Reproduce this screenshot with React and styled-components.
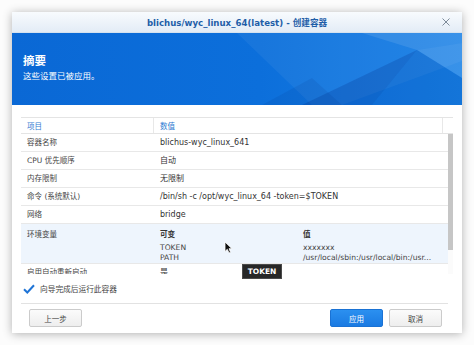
import React from 'react';
import styled, { createGlobalStyle } from 'styled-components';

const Global = createGlobalStyle`
  html, body { margin: 0; padding: 0; background: #fcfcfc; }
  body { font-family: "DejaVu Sans", "Noto Sans CJK SC", sans-serif; }
  * { box-sizing: border-box; }
`;

const Stage = styled.div`
  width: 474px;
  height: 345px;
  padding: 12px;
`;

const Window = styled.div`
  position: relative;
  width: 450px;
  height: 321px;
  background: #fff;
  box-shadow: 0 1px 9px rgba(0, 0, 0, 0.3);
  display: flex;
  flex-direction: column;
  overflow: hidden;
`;

const TitleBar = styled.div`
  height: 21px;
  flex: none;
  display: grid;
  grid-template-columns: 1fr auto 1fr;
  align-items: center;
  background: linear-gradient(#f8fbfe, #e3ecf6);
  border-bottom: 1px solid #d5e2ef;
`;

const Title = styled.div`
  font-weight: bold;
  font-size: 8.6px;
  color: #1f5ea8;
  white-space: nowrap;
`;

const Close = styled.svg`
  justify-self: end;
  margin-right: 12px;
  width: 8px;
  height: 8px;
`;

const Banner = styled.div`
  position: relative;
  height: 72px;
  flex: none;
  padding: 21px 0 0 11px;
  background: linear-gradient(90deg, #0a68d5 0%, #0c6fdb 55%, #1880e6 100%);
  color: #fff;
  overflow: hidden;
`;

const Facets = styled.svg`
  position: absolute;
  inset: 0;
  width: 100%;
  height: 100%;
`;

const BannerTitle = styled.div`
  position: relative;
  font-size: 11.5px;
  font-weight: bold;
  line-height: 15px;
`;

const BannerSub = styled.div`
  position: relative;
  margin-top: 1px;
  font-size: 8.5px;
  line-height: 12px;
`;

const Content = styled.div`
  padding: 12px 9px 0;
  flex: none;
`;

const Head = styled.div`
  display: grid;
  grid-template-columns: 133px 1fr 10px;
  height: 17px;
  border-top: 1px solid #e4e4e4;
  border-bottom: 1px solid #e4e4e4;
`;

const HeadCell = styled.div`
  display: flex;
  align-items: center;
  padding-left: 6px;
  font-size: 7.5px;
  color: #2f7bd2;
  border-right: ${(p) => (p.$last ? 'none' : '1px solid #e8e8e8')};
`;

const Body = styled.div`
  display: flex;
  height: 140px;
  overflow: hidden;
`;

const Rows = styled.div`
  flex: 1;
`;

const Track = styled.div`
  width: 5px;
  flex: none;
  background: #fbfbfb;
`;

const Thumb = styled.div`
  height: 116px;
  background: #c6c6c6;
`;

const Row = styled.div`
  display: grid;
  grid-template-columns: 133px 1fr;
  align-items: ${(p) => (p.$tall ? 'start' : 'center')};
  height: ${(p) => (p.$tall ? '40px' : '18px')};
  padding-top: ${(p) => (p.$tall ? '5px' : '0')};
  background: ${(p) => (p.$active ? '#eef5fd' : '#fff')};
  border-bottom: 1px solid #e8e8e8;
`;

const Label = styled.div`
  padding-left: 6px;
  font-size: 7.5px;
  line-height: 12px;
  color: #444;
  white-space: nowrap;
`;

const Value = styled.div`
  padding-left: 6px;
  font-size: 8px;
  line-height: 12px;
  color: #333;
  white-space: nowrap;
`;

const EnvGrid = styled.div`
  display: grid;
  grid-template-columns: 143px 1fr;
  grid-template-rows: 12px 10px 10px;
  row-gap: 0;
  padding-left: 6px;
  font-size: 7.6px;
  color: #444;
  line-height: 10px;
`;

const EnvHead = styled.div`
  font-weight: bold;
  color: #333;
  line-height: 12px;
  margin-bottom: 3px;
`;

const EnvCell = styled.div`
  white-space: nowrap;
  margin-top: 2px;
`;

const CheckRow = styled.div`
  height: 29px;
  display: flex;
  align-items: center;
  padding-left: 2px;
  gap: 5px;
  font-size: 7.7px;
  color: #444;
`;

const Footer = styled.div`
  margin: 0 14px 0 9px;
  border-top: 1px solid #e2e2e2;
  padding: 5px 6px 0 8px;
  display: flex;
  align-items: center;
  gap: 6px;
`;

const Spacer = styled.div`
  flex: 1;
`;

const Button = styled.div`
  width: 53px;
  height: 18px;
  display: flex;
  align-items: center;
  justify-content: center;
  border-radius: 2px;
  font-size: 7.5px;
  border: 1px solid ${(p) => (p.$primary ? '#1a72d4' : '#cbcbcb')};
  background: ${(p) =>
    p.$primary
      ? 'linear-gradient(#2b90f0, #1a7ae2)'
      : 'linear-gradient(#fbfbfb, #eeeeee)'};
  color: ${(p) => (p.$primary ? '#fff' : '#444')};
`;

const Tooltip = styled.div`
  position: absolute;
  left: 230px;
  top: 252px;
  width: 40px;
  height: 15px;
  display: flex;
  align-items: center;
  justify-content: center;
  background: #272727;
  border: 1px solid #4a4a4a;
  color: #fff;
  font-weight: bold;
  font-size: 7.5px;
`;

const Cursor = styled.svg`
  position: absolute;
  left: 212px;
  top: 229px;
  width: 9px;
  height: 13px;
`;

const rows = [
  ['容器名称', 'blichus-wyc_linux_641'],
  ['CPU 优先顺序', '自动'],
  ['内存限制', '无限制'],
  ['命令 (系统默认)', '/bin/sh -c /opt/wyc_linux_64 -token=$TOKEN'],
  ['网络', 'bridge'],
];

export default function App() {
  return (
    <Stage>
      <Global />
      <Window>
        <TitleBar>
          <span />
          <Title>blichus/wyc_linux_64(latest) - 创建容器</Title>
          <Close viewBox="0 0 8 8">
            <path d="M0.5 0.5 L7.5 7.5 M7.5 0.5 L0.5 7.5" stroke="#7d8b99" strokeWidth="1" />
          </Close>
        </TitleBar>
        <Banner>
          <Facets viewBox="0 0 450 72" preserveAspectRatio="none">
            <polygon points="225,0 450,0 450,28 330,72 300,72" fill="rgba(255,255,255,0.05)" />
            <polygon points="350,0 450,0 450,10 405,17" fill="rgba(255,255,255,0.1)" />
            <polygon points="405,17 450,10 450,45" fill="rgba(255,255,255,0.14)" />
            <polygon points="290,72 405,17 360,72" fill="rgba(0,40,130,0.22)" />
            <polygon points="360,72 405,17 450,45 450,72" fill="rgba(0,50,140,0.14)" />
            <polygon points="250,72 300,45 330,72" fill="rgba(0,40,120,0.1)" />
          </Facets>
          <BannerTitle>摘要</BannerTitle>
          <BannerSub>这些设置已被应用。</BannerSub>
        </Banner>
        <Content>
          <Head>
            <HeadCell>项目</HeadCell>
            <HeadCell>数值</HeadCell>
            <HeadCell $last />
          </Head>
          <Body>
            <Rows>
              {rows.map(([k, v]) => (
                <Row key={k}>
                  <Label>{k}</Label>
                  <Value>{v}</Value>
                </Row>
              ))}
              <Row $tall $active>
                <Label>环境变量</Label>
                <EnvGrid>
                  <EnvHead>可变</EnvHead>
                  <EnvHead>值</EnvHead>
                  <EnvCell>TOKEN</EnvCell>
                  <EnvCell>xxxxxxx</EnvCell>
                  <EnvCell>PATH</EnvCell>
                  <EnvCell>/usr/local/sbin:/usr/local/bin:/usr...</EnvCell>
                </EnvGrid>
              </Row>
              <Row>
                <Label>启用自动重新启动</Label>
                <Value>是</Value>
              </Row>
            </Rows>
            <Track>
              <Thumb />
            </Track>
          </Body>
          <CheckRow>
            <svg width="12" height="10" viewBox="0 0 12 10">
              <path d="M1 5.2 L4.3 8.5 L11 1.2" fill="none" stroke="#1f74d6" strokeWidth="2" />
            </svg>
            向导完成后运行此容器
          </CheckRow>
        </Content>
        <Footer>
          <Button>上一步</Button>
          <Spacer />
          <Button $primary>应用</Button>
          <Button>取消</Button>
        </Footer>
        <Tooltip>TOKEN</Tooltip>
        <Cursor viewBox="0 0 9 13">
          <path d="M1 1 L1 10.5 L3.3 8.3 L5 12 L6.6 11.3 L5 7.7 L8 7.7 Z" fill="#111" stroke="#fff" strokeWidth="0.8" />
        </Cursor>
      </Window>
    </Stage>
  );
}
